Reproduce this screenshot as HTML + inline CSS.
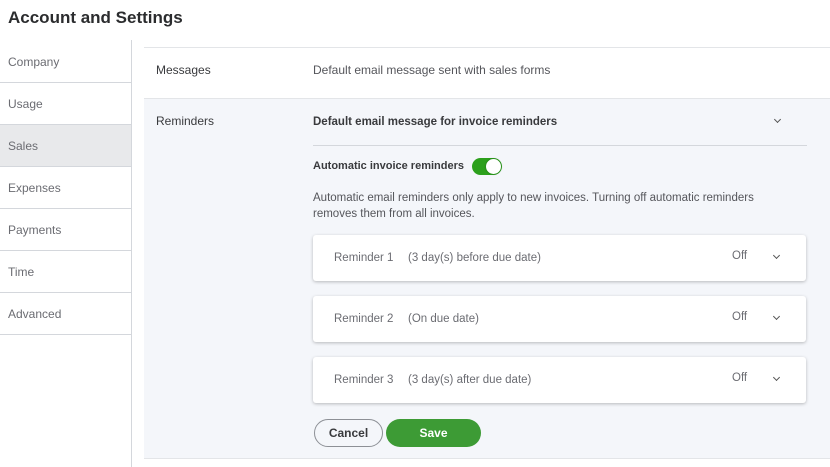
<!DOCTYPE html>
<html><head><style>
*{box-sizing:border-box;margin:0;padding:0}
body{width:830px;height:467px;background:#fff;font-family:"Liberation Sans",sans-serif;position:relative;overflow:hidden;color:#393a3d}
.abs{position:absolute}
h1{position:absolute;left:8px;top:8px;font-size:17px;font-weight:bold;color:#2b2c2e}
.nav{position:absolute;left:0;width:131px;height:42px;border-bottom:1px solid #d4d7dc;font-size:12px;color:#6b6c72;padding:14px 0 0 8px}
.card{position:absolute;left:313px;width:493px;height:46px;background:#fff;border-radius:3px;box-shadow:0 1px 3px rgba(0,0,0,.25);font-size:11.5px;color:#6b6c72}
.card .t{position:absolute;left:21px;top:17px}
.card .s{position:absolute;left:95px;top:17px}
.card .o{position:absolute;left:419px;top:15px}
.chev{position:absolute;width:5px;height:5px;border-right:1.5px solid #555;border-bottom:1.5px solid #555;transform:rotate(45deg)}
</style></head><body>
<h1>Account and Settings</h1>
<div class="abs" style="left:131px;top:40px;width:1px;height:427px;background:#d4d7dc"></div>
<div class="nav" style="top:41px;height:42px">Company</div>
<div class="nav" style="top:83px">Usage</div>
<div class="nav" style="top:125px;background:#e8e9eb">Sales</div>
<div class="nav" style="top:167px">Expenses</div>
<div class="nav" style="top:209px">Payments</div>
<div class="nav" style="top:251px">Time</div>
<div class="nav" style="top:293px">Advanced</div>
<div class="abs" style="left:144px;top:47px;width:686px;height:1px;background:#e3e5e8"></div>
<div class="abs" style="left:156px;top:63px;font-size:12px">Messages</div>
<div class="abs" style="left:313px;top:63px;font-size:12px;color:#55565b">Default email message sent with sales forms</div>
<div class="abs" style="left:144px;top:98px;width:686px;height:361px;background:#f4f6fa;border-top:1px solid #e3e5e8;border-bottom:1px solid #e3e5e8"></div>
<div class="abs" style="left:156px;top:114px;font-size:12px">Reminders</div>
<div class="abs" style="left:313px;top:116px;font-size:11.5px;font-weight:bold">Default email message for invoice reminders</div>
<div class="chev" style="left:775px;top:117px"></div>
<div class="abs" style="left:313px;top:145px;width:494px;height:1px;background:#d4d7dc"></div>
<div class="abs" style="left:313px;top:160px;font-size:11px;font-weight:bold">Automatic invoice reminders</div>
<div class="abs" style="left:472px;top:158px;width:30px;height:17px;border-radius:9px;background:#2ca01c"></div>
<div class="abs" style="left:486px;top:159px;width:15px;height:15px;border-radius:50%;background:#fff;box-shadow:0 0 2px rgba(0,0,0,.3)"></div>
<div class="abs" style="left:313px;top:190px;font-size:11.5px;line-height:16px;color:#55565b;width:480px">Automatic email reminders only apply to new invoices. Turning off automatic reminders removes them from all invoices.</div>
<div class="card" style="top:235px"><span class="t">Reminder 1</span><span class="s">(3 day(s) before due date)</span><span class="o">Off</span><div class="chev" style="left:461px;top:18px"></div></div>
<div class="card" style="top:296px"><span class="t">Reminder 2</span><span class="s">(On due date)</span><span class="o">Off</span><div class="chev" style="left:461px;top:18px"></div></div>
<div class="card" style="top:357px"><span class="t">Reminder 3</span><span class="s">(3 day(s) after due date)</span><span class="o">Off</span><div class="chev" style="left:461px;top:18px"></div></div>
<div class="abs" style="left:314px;top:419px;width:69px;height:28px;border:1px solid #8d9096;border-radius:14px;background:#f4f6fa;font-size:12px;font-weight:bold;text-align:center;line-height:26px">Cancel</div>
<div class="abs" style="left:386px;top:419px;width:95px;height:28px;border-radius:14px;background:#3d9b35;color:#fff;font-size:12px;font-weight:bold;text-align:center;line-height:28px">Save</div>
</body></html>
